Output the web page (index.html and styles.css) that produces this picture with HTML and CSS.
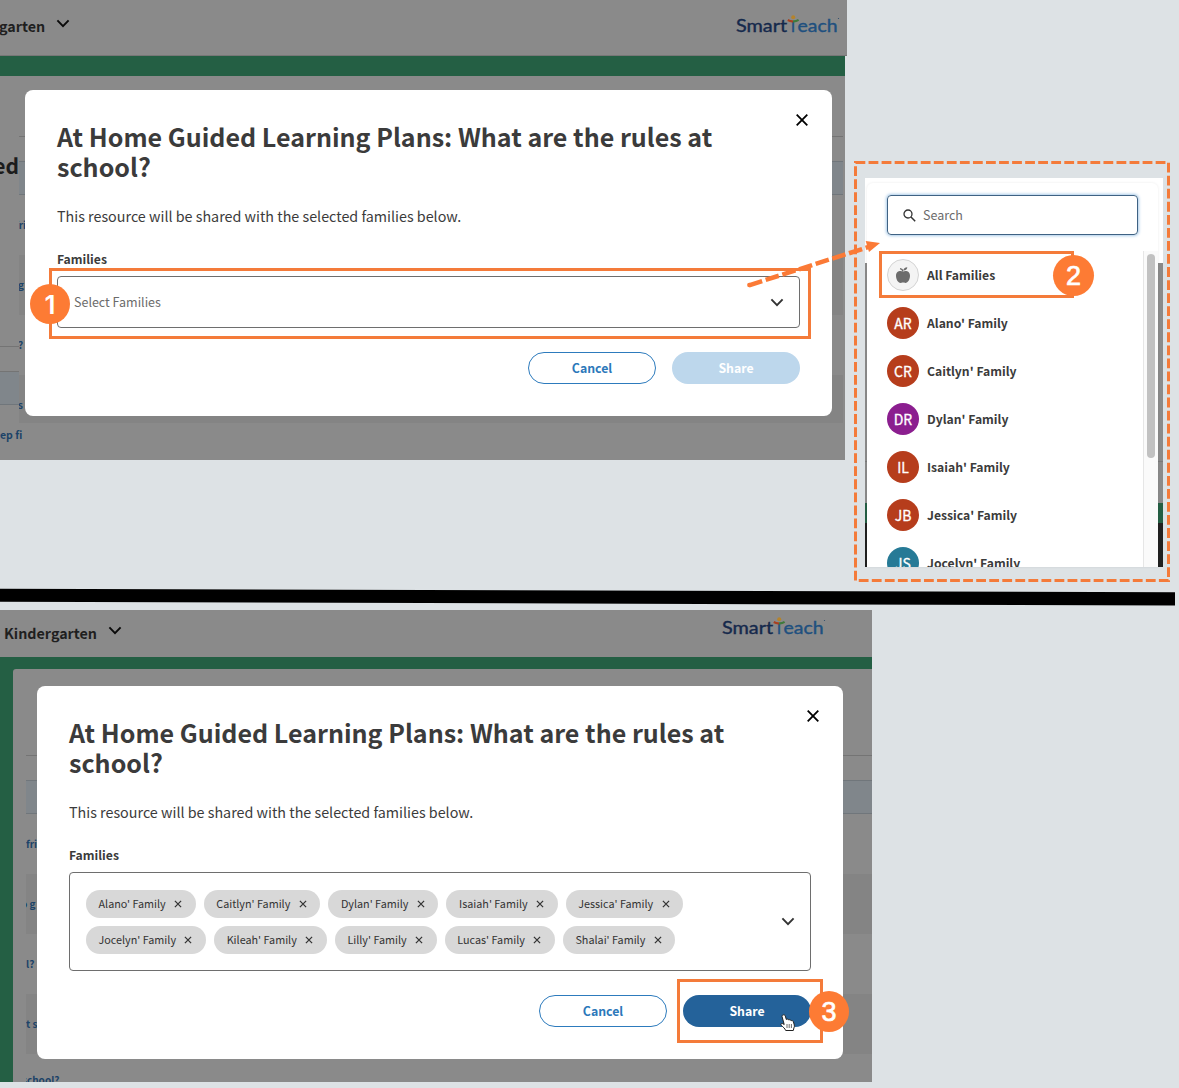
FILE: index.html
```html
<!DOCTYPE html>
<html lang="en">
<head>
<meta charset="utf-8">
<title>Share with families</title>
<link rel="stylesheet" href="styles.css">
</head>
<body>
<svg class="defs" width="0" height="0" aria-hidden="true">
  <symbol id="chevron" viewBox="0 0 14 9"><path d="M1.4 1.4 7 7.2 12.6 1.4" fill="none" stroke="currentColor" stroke-width="1.900"/></symbol>
  <symbol id="cross" viewBox="0 0 12 12"><path d="M.7.7 11.300 11.300M11.300.7.7 11.300" fill="none" stroke="currentColor" stroke-width="1.800"/></symbol>
  <symbol id="x-small" viewBox="0 0 8 8"><path d="M.9.9 7.1 7.1M7.1.9.9 7.1" fill="none" stroke="currentColor" stroke-width="1.250"/></symbol>
</svg>
<main class="board">
  <section class="top">
    <div class="shot shot-one">
      <header class="bar"><span class="grade">garten</span><svg class="bar-chevron"><use href="#chevron"/></svg>
        <svg class="logo" viewBox="0 0 106 24">
          <text x="0" y="19" textLength="51" lengthAdjust="spacingAndGlyphs">Smart</text>
          <text x="52.500" y="19" textLength="9" lengthAdjust="spacingAndGlyphs" class="logo-light">T</text>
          <text x="61.500" y="19" textLength="40" lengthAdjust="spacingAndGlyphs" class="logo-light">each</text>
          <path class="logo-mask" d="M51.500 4h12v4.200h-12z"/>
          <path d="M51.800 7q2.500 1.500 5.200 1.300" fill="none" stroke="#a8401f" stroke-width="2.200"/>
          <path d="M57 8.300q3 .2 5.600-1.400" fill="none" stroke="#3f7a3c" stroke-width="2.200"/>
          <circle cx="57.200" cy="4.200" r="2" fill="#b5832b"/><circle cx="102.500" cy="5.500" r=".6" fill="#2b4a6b"/>
        </svg>
      </header>
      <div class="green-strip"></div>
      <div class="sheet">
        <div class="rail"><div class="rail-title">ed</div><div class="rail-gap"></div><div class="rail-head"></div></div>
        <div class="table">
          <div class="space"></div><div class="filter"></div><div class="head"></div>
          <div class="row"><span>fri</span></div>
          <div class="row odd"><span>g</span></div>
          <div class="row"><span>?</span></div>
          <div class="row odd short"><span>s</span></div>
        </div>
        <div class="last">ep fi</div>
      </div>
      <div class="modal">
        <svg class="close"><use href="#cross"/></svg>
        <h1>At Home Guided Learning Plans: What are the rules at<br>school?</h1>
        <p>This resource will be shared with the selected families below.</p>
        <label>Families</label>
        <div class="select"><span class="placeholder">Select Families</span><svg class="arrow"><use href="#chevron"/></svg></div>
        <div class="actions"><button class="cancel">Cancel</button><button class="share disabled">Share</button></div>
      </div>
    </div>
    <div class="callout">
      <svg class="dashes" width="316" height="421"><rect x="1.500" y="1.500" width="313" height="418" fill="none" stroke="#f47b3a" stroke-width="3" stroke-dasharray="9.800 3.250"/></svg>
      <div class="snippet">
        <div class="panel">
          <div class="search"><svg width="13" height="13" viewBox="0 0 13 13"><circle cx="5" cy="5" r="4" fill="none" stroke="#333" stroke-width="1.300"/><path d="m8 8 4.200 4.200" stroke="#333" stroke-width="1.500"/></svg><span>Search</span></div>
          <div class="list">
            <ul>
              <li><i class="all"><svg width="16" height="17" viewBox="0 0 16 17"><path d="M8 4.700C5.500 3.300 1 4.100 1 8.800c0 3.500 2 7.200 4.600 7.200 1 0 1.400-.4 2.400-.4s1.400.4 2.400.4c2.600 0 4.600-3.700 4.600-7.200 0-4.700-4.500-5.500-7-4.100z" fill="#6c6c6c"/><path d="M7.900 4.600C7.700 3 6.800 2 5 1.700" fill="none" stroke="#6c6c6c" stroke-width="1.300"/><path d="M8.300 3.500C8.300 1.500 10 .5 12.300.3c0 2-1.500 3.300-4 3.200z" fill="#6c6c6c"/></svg></i><b>All Families</b></li>
              <li><i>AR</i><b>Alano' Family</b></li>
              <li><i>CR</i><b>Caitlyn' Family</b></li>
              <li><i class="purple">DR</i><b>Dylan' Family</b></li>
              <li><i>IL</i><b>Isaiah' Family</b></li>
              <li><i>JB</i><b>Jessica' Family</b></li>
              <li><i class="teal">JS</i><b>Jocelyn' Family</b></li>
            </ul>
            <div class="track"><div class="thumb"></div></div>
          </div>
        </div>
      </div>
    </div>
  </section>
  <svg class="divider" width="1179" height="22" viewBox="0 588 1179 22"><path d="M0 588.700 1175 592.200V605.500L0 601.700z"/></svg>
  <section class="shot shot-two">
    <header class="bar"><span class="grade">Kindergarten</span><svg class="bar-chevron"><use href="#chevron"/></svg>
      <svg class="logo" viewBox="0 0 106 24">
        <text x="0" y="19" textLength="51" lengthAdjust="spacingAndGlyphs">Smart</text>
        <text x="52.500" y="19" textLength="9" lengthAdjust="spacingAndGlyphs" class="logo-light">T</text>
        <text x="61.500" y="19" textLength="40" lengthAdjust="spacingAndGlyphs" class="logo-light">each</text>
        <path class="logo-mask" d="M51.500 4h12v4.200h-12z"/>
        <path d="M51.800 7q2.500 1.500 5.200 1.300" fill="none" stroke="#a8401f" stroke-width="2.200"/>
        <path d="M57 8.300q3 .2 5.600-1.400" fill="none" stroke="#3f7a3c" stroke-width="2.200"/>
        <circle cx="57.200" cy="4.200" r="2" fill="#b5832b"/><circle cx="102.500" cy="5.500" r=".6" fill="#2b4a6b"/>
      </svg>
    </header>
    <div class="green-frame">
      <div class="sheet">
        <div class="table">
          <div class="space"></div><div class="filter"></div><div class="head"></div>
          <div class="row"><span>fri</span></div>
          <div class="row odd"><span class="shifted">o g</span></div>
          <div class="row"><span>l?</span></div>
          <div class="row odd"><span>t s</span></div>
          <div class="row cut"><span>school?</span></div>
        </div>
      </div>
    </div>
    <div class="modal">
      <svg class="close"><use href="#cross"/></svg>
      <h1>At Home Guided Learning Plans: What are the rules at<br>school?</h1>
      <p>This resource will be shared with the selected families below.</p>
      <label>Families</label>
      <div class="select multi">
        <div class="chips">
          <span class="chip"><em>Alano' Family</em><svg><use href="#x-small"/></svg></span>
          <span class="chip"><em>Caitlyn' Family</em><svg><use href="#x-small"/></svg></span>
          <span class="chip"><em>Dylan' Family</em><svg><use href="#x-small"/></svg></span>
          <span class="chip"><em>Isaiah' Family</em><svg><use href="#x-small"/></svg></span>
          <span class="chip"><em>Jessica' Family</em><svg><use href="#x-small"/></svg></span>
          <span class="chip"><em>Jocelyn' Family</em><svg><use href="#x-small"/></svg></span>
          <span class="chip"><em>Kileah' Family</em><svg><use href="#x-small"/></svg></span>
          <span class="chip"><em>Lilly' Family</em><svg><use href="#x-small"/></svg></span>
          <span class="chip"><em>Lucas' Family</em><svg><use href="#x-small"/></svg></span>
          <span class="chip"><em>Shalai' Family</em><svg><use href="#x-small"/></svg></span>
        </div>
        <svg class="arrow"><use href="#chevron"/></svg>
      </div>
      <div class="actions"><button class="cancel">Cancel</button><button class="share">Share</button></div>
    </div>
  </section>
  <div class="mark mark-one"></div>
  <div class="mark mark-two"></div>
  <div class="mark mark-three"></div>
  <svg class="pointer-line" width="140" height="60" viewBox="745 235 140 60"><path d="M749 285.300 870 246.500" stroke="#fb7a36" stroke-width="4.500" stroke-dasharray="13.800 3.700" fill="none"/><circle cx="749.300" cy="285" r="2.200" fill="#fb7a36"/><path d="M865.700 241 880 243 869 252z" fill="#fb7a36"/></svg>
  <div class="badge badge-one">1</div>
  <div class="badge badge-two">2</div>
  <div class="badge badge-three">3</div>
  <svg class="hand" width="16" height="18" viewBox="0 0 16 18"><path d="M3 1c1-.5 2 0 2.300 1l1 3.500c.8-.7 2-.5 2.400.5 1-.6 2-.2 2.400.7 1-.4 2 0 2.300 1l.9 3.300c.3 1.200 0 2-.4 3l-.6 2.500H5.700C5 14.500 3 13 1.300 11.300.4 10.300 1.300 9 2.700 9.600l1.500.9L2.100 2.700C1.900 1.900 2.200 1.300 3 1z" fill="#fff" stroke="#222" stroke-width="1"/><path d="M7 10v4M9.200 10v4M11.400 10v4" stroke="#444" stroke-width=".8"/></svg>
</main>
</body>
</html>
```
FILE: styles.css
```css
* { box-sizing: border-box; }
body { margin: 0; background: #dde2e5; font-family: "Noto Sans CJK SC", "Noto Sans", sans-serif; color: #3b3b3b; }
.defs { position: absolute; }
.board { position: relative; width: 1179px; height: 1088px; overflow: hidden; }
.top { display: flex; align-items: flex-start; height: 588px; }
.divider { display: block; }

.shot { position: relative; background: #8a8a8a; }
.shot-one { width: 845px; height: 460px; }
.shot-two { width: 872px; height: 472px; overflow: hidden; }
.bar { display: flex; align-items: center; background: #8a8a8a; color: #1f1f1f; }
.shot-one .bar { width: 847px; height: 56px; border-bottom: 1px solid #777; padding: 0 5px 4px 0; }
.shot-two .bar { height: 47px; padding: 0 44px 2px 4px; }
.grade { font-size: 14.300px; font-weight: 700; line-height: 20px; }
.shot-one .grade { margin-left: -1px; }
.bar-chevron { width: 14px; height: 9px; margin: -4px 0 0 11px; color: #0a0a0a; }
.logo { width: 106px; height: 24px; margin-left: auto; margin-top: -1px; }
.shot-two .logo { margin-top: -11px; }
.logo text { font-family: Lato, sans-serif; font-size: 18px; fill: #15294c; stroke: #15294c; stroke-width: .4px; }
.logo .logo-light { fill: #20507f; stroke: #20507f; }
.logo-mask { fill: #8a8a8a; }
.green-strip { height: 20px; background: #245f44; }
.green-frame { background: #245f44; padding: 12px 0 0 13px; }

.shot-one .sheet { display: grid; grid-template-columns: 19px 1fr; padding-right: 2px; height: 384px; }
.shot-two .sheet { background: #8a8a8a; border-top-left-radius: 3px; padding-left: 13px; height: 413px; overflow: hidden; }
.rail { overflow: hidden; }
.rail-title { height: 180px; padding-top: 74px; color: #1c1c1c; font-size: 21px; font-weight: 700; line-height: 30px; direction: rtl; }
.rail-gap { height: 91px; border-bottom: 1px solid #747474; }
.rail-head { height: 58px; border-bottom: 1px solid #70767b; background: linear-gradient(#8a8a8a 24px, #747474 24px, #747474 25px, #80868b 25px); }
.table { overflow: hidden; }
.space { height: 60px; }
.shot-two .space { height: 86px; }
.filter { height: 25px; border-top: 1px solid #747474; }
.head { height: 34px; background: #80868b; border: solid #70767b; border-width: 1px 0; }
.row { height: 60px; color: #1c4368; font-size: 10px; font-weight: 700; line-height: 60px; white-space: nowrap; overflow: hidden; }
.odd { background: #848484; }
.short { height: 48px; }
.shot-one .row span { margin-left: -1px; }
.shot-one .row:nth-child(4) span { margin-left: -4px; }
.row .shifted { margin-left: -5px; }
.cut span { display: block; margin-left: -4px; line-height: 52px; }
.last { grid-column: 1 / 3; height: 37px; color: #1c4368; font-size: 10.500px; font-weight: 700; line-height: 24px; }

.modal { position: absolute; background: #fff; border-radius: 8px; padding: 31px 32px 32px; }
.shot-one .modal { left: 25px; top: 90px; width: 807px; height: 326px; }
.shot-two .modal { left: 37px; top: 76px; width: 806px; height: 373px; }
.close { position: absolute; width: 12px; height: 12px; right: 24px; top: 24px; color: #000; }
h1 { margin: 0; font-size: 25.050px; font-weight: 700; line-height: 30px; white-space: nowrap; }
p { margin: 24px 0 0; font-size: 14.320px; line-height: 22px; }
label { display: block; margin-top: 22px; height: 27px; font-size: 12.200px; font-weight: 700; line-height: 20px; }
.select { display: flex; align-items: center; justify-content: space-between; height: 52px; padding: 0 15px 0 16px; border: 1px solid #6e6e6e; border-radius: 4px; }
.placeholder { padding-bottom: 2px; color: #6b6b6b; font-size: 12.500px; }
.arrow { width: 14px; height: 9px; color: #333; }
.multi { height: 99px; }
.chips { display: flex; flex-wrap: wrap; gap: 8px; width: 620px; }
.chip { display: flex; align-items: center; justify-content: space-between; gap: 8.300px; height: 28px; padding: 0 13.800px 0 12.500px; border-radius: 14px; background: #d8d8d8; }
.chip em { padding-bottom: 2px; font-style: normal; font-size: 10.800px; color: #333; white-space: nowrap; }
.chip svg { width: 8px; height: 8px; color: #333; }
.actions { display: flex; justify-content: flex-end; gap: 16px; margin-top: 24px; }
button { width: 128px; height: 32px; padding: 0; border: 1px solid #2d7bbd; border-radius: 16px; background: #fff; color: #2c78ba; font: 700 12.300px/20px "Noto Sans CJK SC", sans-serif; }
.share { border: 0; background: #24629a; color: #fff; }
.disabled { background: #bdd7ec; }

.callout { position: relative; width: 316px; height: 421px; margin: 161px 0 0 9px; padding: 17px 7px 0 11px; }
.dashes { position: absolute; left: 0; top: 0; }
.snippet { height: 389px; padding: 5px 5px 0 2px; background: linear-gradient(#fff 85px, #8a8a8a 85px, #8a8a8a 283px, #7a7a7a 283px, #7a7a7a 284px, #8a8a8a 284px, #8a8a8a 325px, #245f44 325px, #245f44 345px, #202020 345px); }
.panel { height: 384px; background: #fff; border-radius: 6px 6px 0 0; overflow: hidden; box-shadow: 0 0 3px rgba(0,0,0,.08); }
.search { display: flex; align-items: center; gap: 7px; width: 251px; height: 40px; margin: 12px 0 0 20px; padding-left: 15px; border: 1px solid #3f6283; border-radius: 4px; box-shadow: 0 0 3px 1px #a9cbe9; color: #6b6b6b; font-size: 12.500px; }
.search span { padding-bottom: 2px; }
.list { display: flex; height: 316px; margin-top: 16px; }
ul { list-style: none; margin: 0; padding: 0 0 0 20px; flex: 1; }
li { display: flex; align-items: center; gap: 8px; height: 48px; font-size: 12.200px; }
li i { display: flex; align-items: center; justify-content: center; width: 32px; height: 32px; border-radius: 50%; background: #b63d1c; color: #fff; font-style: normal; font-size: 14px; -webkit-text-stroke: .3px #fff; }
li .purple { background: #8b1e8f; }
li .teal { background: #267a96; }
li .all { background: #f4f4f4; border: 1px solid #d4d4d4; }
.track { width: 15px; padding: 3px 0 0 3px; border-left: 1px solid #e6e6e6; background: #fafafa; }
.thumb { width: 8px; height: 204px; border-radius: 4px; background: #c1c1c1; }

.mark { position: absolute; border: 3px solid #f47b3a; }
.mark-one { left: 49px; top: 268px; width: 762px; height: 71px; }
.mark-two { left: 879px; top: 251px; width: 195px; height: 47px; }
.mark-three { left: 677px; top: 979px; width: 146px; height: 64px; }
.pointer-line { position: absolute; left: 745px; top: 235px; }
.badge { position: absolute; width: 40px; height: 40px; border-radius: 50%; background: #fd7b34; color: #fff; font: 27px/42px "Liberation Sans", sans-serif; text-align: center; -webkit-text-stroke: .7px #fff; }
.badge-one { left: 30px; top: 284px; font: 600 26px/42px Inter, sans-serif; -webkit-text-stroke: 0; }
.badge-two { left: 1053px; top: 255px; width: 41px; height: 41px; }
.badge-three { left: 809px; top: 991px; height: 41px; }
.hand { position: absolute; left: 780px; top: 1014px; }
```
